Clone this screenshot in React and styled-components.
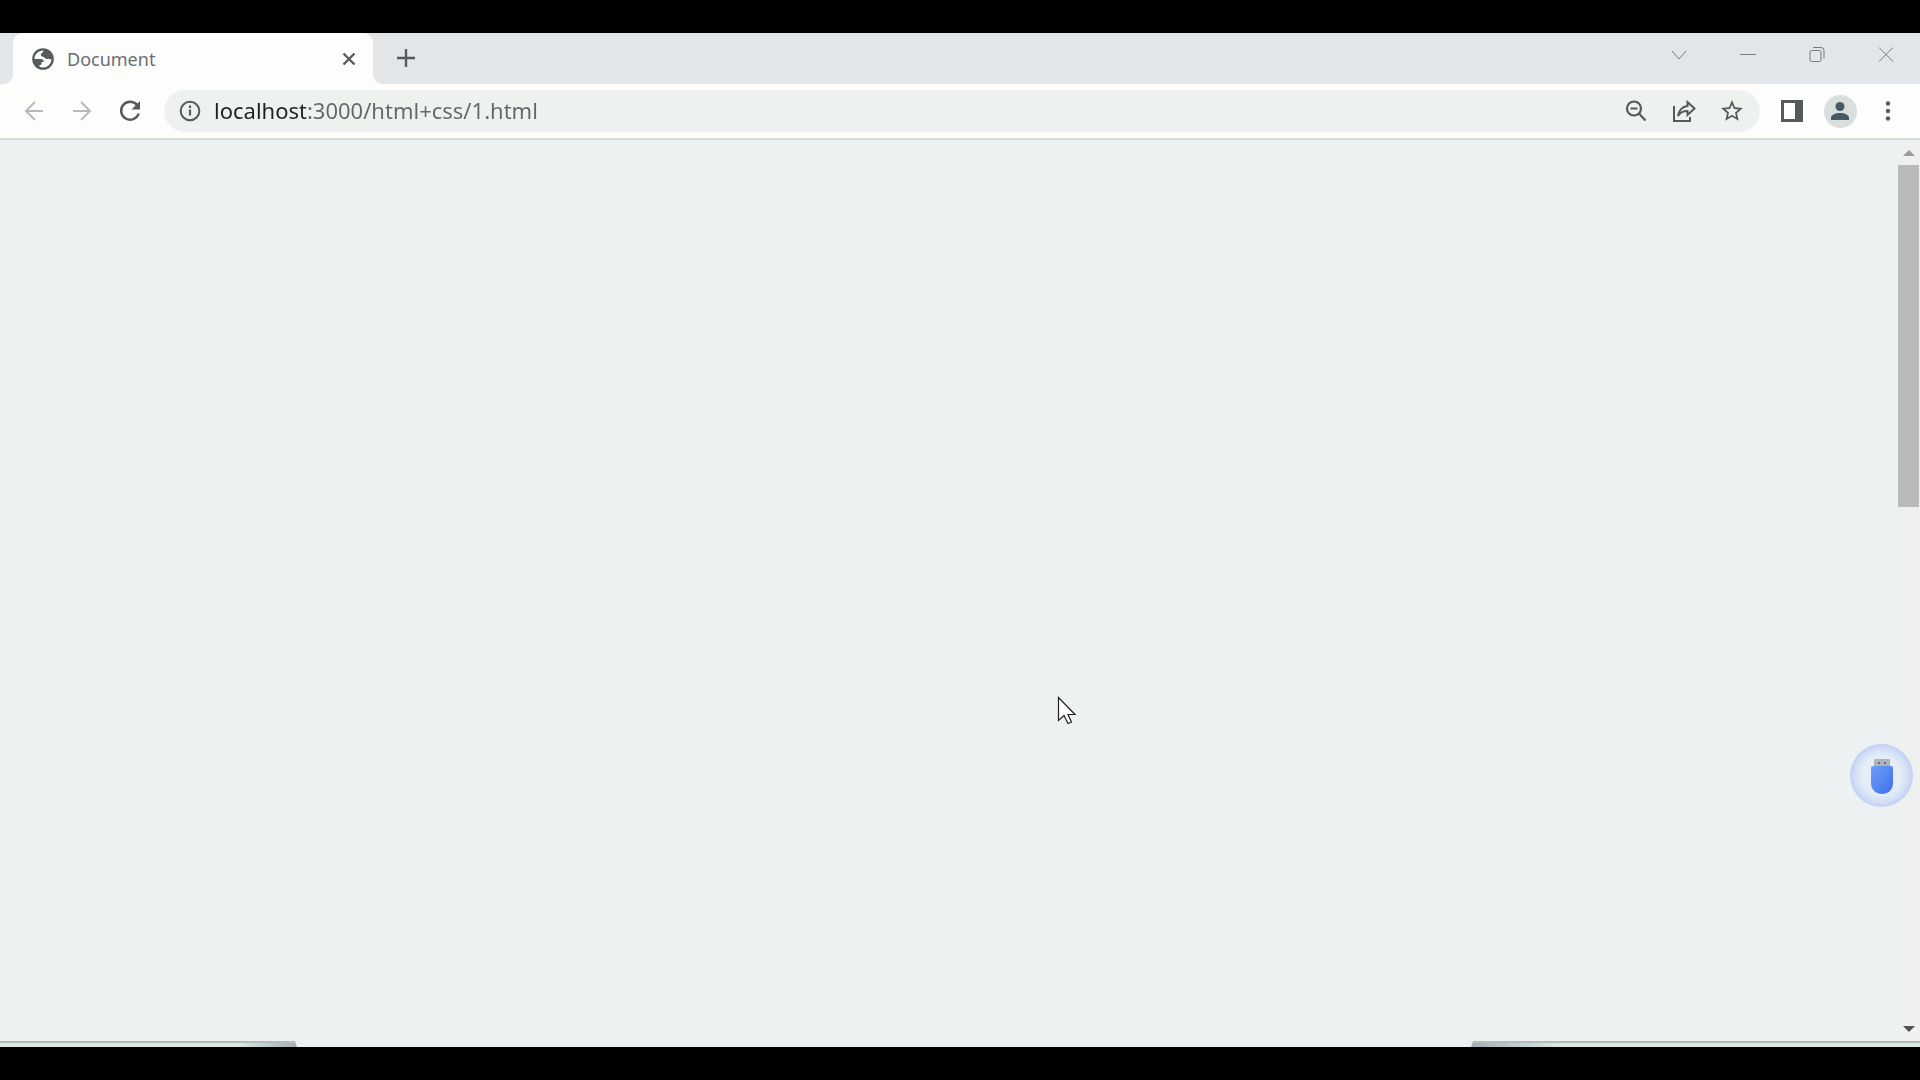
import React from "react";
import styled, { createGlobalStyle } from "styled-components";

const GlobalStyle = createGlobalStyle`
  * { box-sizing: border-box; }
  body {
    margin: 0;
    background: #000;
    font-family: "Noto Sans", "Open Sans", sans-serif;
  }
`;

const Screen = styled.div`
  position: relative;
  display: flex;
  flex-direction: column;
  min-height: 100vh;
  padding: 33px 0;
  background: #000;
`;

const TabStrip = styled.header`
  display: flex;
  align-items: flex-start;
  height: 51px;
  padding-left: 13px;
  background: #e3e6e9;
`;

const Tab = styled.div`
  position: relative;
  display: flex;
  align-items: center;
  width: 360px;
  height: 51px;
  padding: 0 12px 0 19px;
  border-radius: 10px 10px 0 0;
  background: #fdfdfc;

  &::before,
  &::after {
    content: "";
    position: absolute;
    bottom: 0;
    width: 10px;
    height: 10px;
  }
  &::before {
    right: 100%;
    background: radial-gradient(circle at 0 0, transparent 10px, #fdfdfc 10px);
  }
  &::after {
    left: 100%;
    background: radial-gradient(circle at 100% 0, transparent 10px, #fdfdfc 10px);
  }
`;

const TabTitle = styled.span`
  flex: 1;
  margin-left: 13px;
  font-size: 18px;
  line-height: 24px;
  color: #6b6e70;
`;

const IconButton = styled.button`
  display: flex;
  align-items: center;
  justify-content: center;
  flex: none;
  width: ${(p) => p.$size || 48}px;
  height: ${(p) => p.$height || 48}px;
  padding: 0;
  border: 0;
  background: none;
  color: ${(p) => p.$color || "#555a5c"};
`;

const WindowControls = styled.div`
  display: flex;
  margin-left: auto;
`;

const Toolbar = styled.nav`
  display: flex;
  align-items: center;
  height: 56px;
  padding: 0 8px 0 10px;
  border-bottom: 2px solid #d4dfd2;
  background: #fdfdfc;
`;

const AddressBar = styled.div`
  display: flex;
  flex: 1;
  align-items: center;
  height: 42px;
  margin: 0 8px 0 10px;
  padding: 0 4px 0 14px;
  border-radius: 21px;
  background: #edf2ee;
`;

const Address = styled.input`
  flex: 1;
  min-width: 0;
  height: 32px;
  margin-left: 12px;
  padding: 0 0 2px;
  border: 0;
  outline: 0;
  font: 22px/30px "Noto Sans", "Open Sans", sans-serif;
  color: #63686a;
  background: linear-gradient(90deg, #1f2223 92px, #63686a 92px);
  background-clip: text;
  -webkit-text-fill-color: transparent;
`;

const Avatar = styled.span`
  display: flex;
  align-items: center;
  justify-content: center;
  width: 33px;
  height: 33px;
  border-radius: 50%;
  background: #d9dedf;
`;

const Viewport = styled.main`
  display: flex;
  flex: 1;
  background: #ecf1f1;
`;

const Page = styled.section`
  flex: 1;
`;

const Scrollbar = styled.aside`
  display: flex;
  flex-direction: column;
  width: 22px;
  background: #eff0f0;
`;

const ScrollThumb = styled.div`
  flex: none;
  width: 21px;
  height: 342px;
  margin-bottom: auto;
  background: #b9babb;
`;

const PageEdge = styled.div`
  display: flex;
  justify-content: space-between;
  height: 6px;
  background: #ecf1f1;
`;

const EdgePanel = styled.div`
  width: ${(p) => p.$width};
  border-top: 2px solid #b2beb7;
  background: linear-gradient(${(p) => p.$to}, #d9e9e8 80%, #a5adb5);
  clip-path: ${(p) => p.$clip};
`;

const Pointer = styled.svg`
  position: absolute;
  left: 1057px;
  top: 696px;
`;

const DriveBadge = styled.button`
  position: absolute;
  right: 7px;
  top: 744px;
  display: flex;
  align-items: center;
  justify-content: center;
  width: 63px;
  height: 63px;
  padding: 3px 0 0;
  border: 0;
  border-radius: 50%;
  background: radial-gradient(circle, #e5edf6 42%, #d4e1f5 58%, #c3d0f3 70%);
`;

const Svg = ({ w, h = w, sw = 2, children }) => (
  <svg width={w} height={h} viewBox={`0 0 ${w} ${h}`} fill="none" stroke="currentColor" strokeWidth={sw} aria-hidden="true">
    {children}
  </svg>
);

const Material = ({ size, d }) => (
  <svg width={size} height={size} viewBox="1 1 22 22" fill="currentColor" aria-hidden="true">
    <path d={d} />
  </svg>
);

export default function App() {
  return (
    <>
      <GlobalStyle />
      <Screen>
        <TabStrip>
          <Tab>
            <Svg w={22}>
              <circle cx="11" cy="11" r="9.7" strokeWidth="2.2" stroke="#555a5c" />
              <path fill="#555a5c" stroke="none" d="M12 1.500c-.8 1.500-.5 2.500-2 3.500-1.300.8-1.600 2-.6 3 1 .9 2.200.4 3 1.600.7 1.200 2 1.600 3.100 1.300 1.500-.4 2 .8 4.500.6.6-5-3-9.500-8-10z" />
              <path fill="#555a5c" stroke="none" d="M1.500 11h6.800c2.400 0 3.500 1.200 3.500 3h-2.300v1.600c0 1-.9 1.500-2 1.500v2.600C4 18.500 1.300 15 1.500 11z" />
            </Svg>
            <TabTitle>Document</TabTitle>
            <IconButton $size={24} $height={24} aria-label="Close tab">
              <Svg w={14} sw={2.4}><path d="M1.500 1.500l11 11M12.500 1.500l-11 11" /></Svg>
            </IconButton>
          </Tab>
          <IconButton $size={66} $height={50} aria-label="New tab">
            <Svg w={18} sw={2.4}><path d="M9 0v18M0 9h18" /></Svg>
          </IconButton>
          <WindowControls>
            <IconButton $size={69} $height={43} $color="#777b7c" aria-label="Search tabs">
              <Svg w={16} sw={1}><path d="M1 4l7 8 7-8" /></Svg>
            </IconButton>
            <IconButton $size={69} $height={43} $color="#777b7c" aria-label="Minimize">
              <Svg w={16} sw={1}><path d="M0 7.500h16" /></Svg>
            </IconButton>
            <IconButton $size={69} $height={43} $color="#777b7c" aria-label="Restore">
              <Svg w={16} sw={1}>
                <rect x="1" y="3.500" width="11" height="11" rx="1.500" />
                <path d="M4 .5h8a3 3 0 0 1 3 3v8" />
              </Svg>
            </IconButton>
            <IconButton $size={69} $height={43} $color="#777b7c" aria-label="Close window">
              <Svg w={16} sw={1}><path d="M1 .5l14 14M15 .5l-14 14" /></Svg>
            </IconButton>
          </WindowControls>
        </TabStrip>

        <Toolbar>
          <IconButton $color="#b7babf" aria-label="Back">
            <Svg w={20} sw={2}><path d="M19 10H2M11 1l-9 9 9 9" /></Svg>
          </IconButton>
          <IconButton $color="#b7babf" aria-label="Forward">
            <Svg w={20} sw={2}><path d="M1 10h17M9 1l9 9-9 9" /></Svg>
          </IconButton>
          <IconButton aria-label="Reload">
            <Svg w={22} sw={2.4}>
              <path d="M18.500 5.500A9 9 0 1 0 19.700 13.500" />
              <path d="M21 1v8.500h-8.500z" fill="currentColor" stroke="none" />
            </Svg>
          </IconButton>
          <AddressBar>
            <IconButton $size={24} $height={24} aria-label="Site information">
              <Svg w={22} sw={2}>
                <circle cx="11" cy="11" r="9.300" />
                <path d="M11 9.500v6M11 5.500v2.400" strokeWidth="2.200" />
              </Svg>
            </IconButton>
            <Address aria-label="Address" defaultValue="localhost:3000/html+css/1.html" spellCheck="false" />
            <IconButton aria-label="Zoom">
              <Svg w={22} sw={2.2}>
                <circle cx="9" cy="8.500" r="7" />
                <path d="M14 13.500l6.500 7M5.500 8.500h7" />
              </Svg>
            </IconButton>
            <IconButton aria-label="Share">
              <Svg w={24} sw={2}>
                <path d="M2 7v15h16v-4" />
                <path d="M15.500 3l7 6.500-7 6.500v-4C11 12 8 13.500 6 17c.5-5 4-9.500 9.500-10z" />
              </Svg>
            </IconButton>
            <IconButton aria-label="Bookmark">
              <Material size={24} d="M22 9.240l-7.190-.62L12 2 9.190 8.630 2 9.240l5.460 4.730L5.820 21 12 17.270 18.180 21l-1.630-7.030L22 9.240zM12 15.400l-3.760 2.270 1-4.280-3.320-2.880 4.380-.38L12 6.100l1.710 4.040 4.380.38-3.320 2.880 1 4.280L12 15.400z" />
            </IconButton>
          </AddressBar>
          <IconButton aria-label="Side panel">
            <Svg w={22}>
              <rect x="1.500" y="1.500" width="19" height="19" strokeWidth="3" />
              <path d="M14 1h7v20h-7z" fill="currentColor" stroke="none" />
            </Svg>
          </IconButton>
          <IconButton $color="#455a64" aria-label="Profile">
            <Avatar>
              <Svg w={20}>
                <circle cx="10" cy="5.500" r="4.500" fill="currentColor" stroke="none" />
                <path d="M1 19v-2c0-3.500 4.500-5 9-5s9 1.500 9 5v2z" fill="currentColor" stroke="none" />
              </Svg>
            </Avatar>
          </IconButton>
          <IconButton aria-label="Menu">
            <Svg w={20}>
              <g fill="currentColor" stroke="none">
                <circle cx="10" cy="2.500" r="2.200" />
                <circle cx="10" cy="10" r="2.200" />
                <circle cx="10" cy="17.500" r="2.200" />
              </g>
            </Svg>
          </IconButton>
        </Toolbar>

        <Viewport>
          <Page />
          <Scrollbar>
            <IconButton $size={21} $height={25} $color="#999b9b" aria-label="Scroll up">
              <Svg w={12} h={6}><path d="M0 6l6-6 6 6z" fill="currentColor" stroke="none" /></Svg>
            </IconButton>
            <ScrollThumb />
            <IconButton $size={21} $height={24} $color="#505352" aria-label="Scroll down">
              <Svg w={12} h={6}><path d="M0 0l6 6 6-6z" fill="currentColor" stroke="none" /></Svg>
            </IconButton>
          </Scrollbar>
        </Viewport>
        <PageEdge>
          <EdgePanel $width="297px" $to="to right" $clip="polygon(0 0, calc(100% - 2px) 0, 100% 100%, 0 100%)" />
          <EdgePanel $width="449px" $to="to left" $clip="polygon(2px 0, 100% 0, 100% 100%, 0 100%)" />
        </PageEdge>

        <Pointer width="20" height="30" viewBox="0 0 20 30" aria-hidden="true">
          <path d="M1.500 1.500v23l5.500-5 4 8 3.500-1.500-3.500-7.500h7z" fill="#fff" stroke="#222" strokeWidth="1.200" />
        </Pointer>
        <DriveBadge aria-label="Removable drive">
          <svg width="24" height="36" viewBox="0 0 24 36" aria-hidden="true">
            <defs>
              <linearGradient id="drive" x1="0" y1="0" x2="1" y2="1">
                <stop offset="0" stopColor="#6f9ef5" />
                <stop offset="1" stopColor="#3f70ec" />
              </linearGradient>
            </defs>
            <path d="M4 0h16v9H4z" fill="#aeb4b8" />
            <path d="M8 3h2v2H8zM14 3h2v2h-2z" fill="#666d70" />
            <path d="M1 9q0-2 2-2h18q2 0 2 2v15c0 7-5 11-11 11S1 31 1 24z" fill="url(#drive)" />
          </svg>
        </DriveBadge>
      </Screen>
    </>
  );
}
